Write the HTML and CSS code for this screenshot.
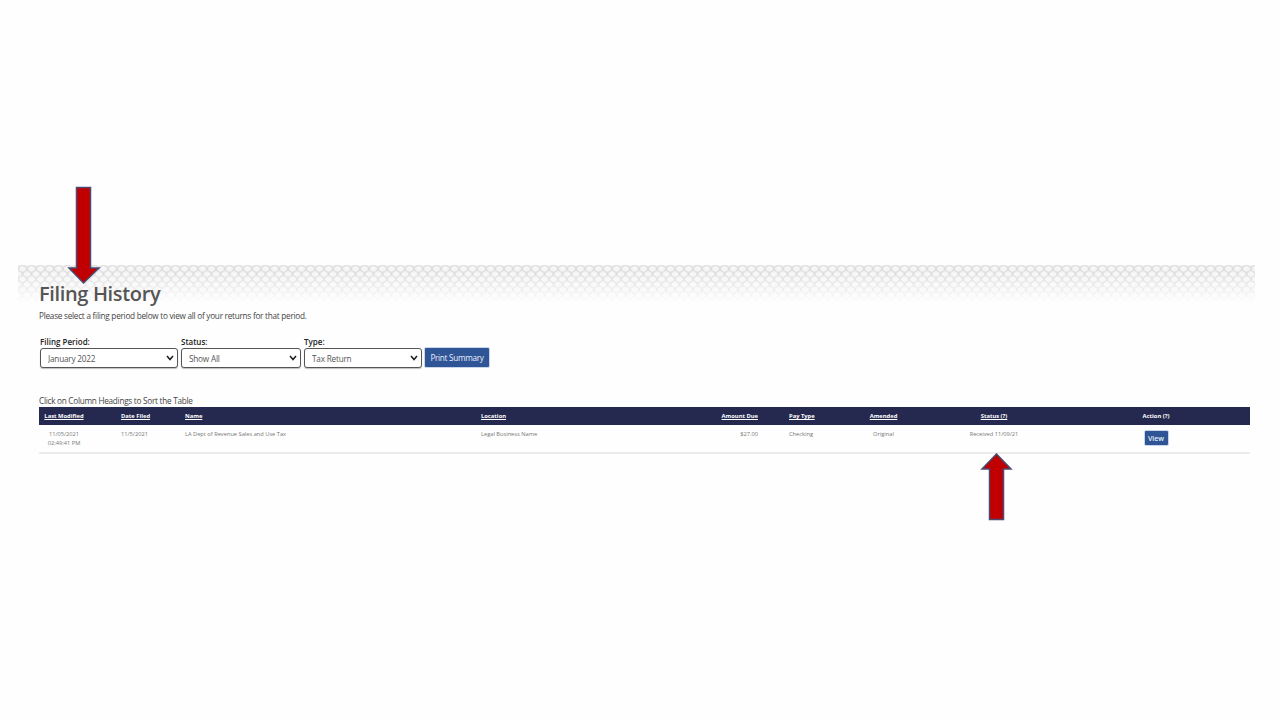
FILE: index.html
```html
<!DOCTYPE html>
<html lang="en">
  <head>
    <meta charset="UTF-8" />
    <title>Filing History</title>
    <link rel="stylesheet" href="styles.css">
  </head>
  <body>
    <div class="page">
      <svg class="band" width="1237" height="38">
        <defs>
          <pattern id="hex" width="9" height="10.400" patternUnits="userSpaceOnUse">
            <path d="M4.500 0.600L7.800 2.500V5L4.500 6.900L1.200 5V2.500Z" />
            <path d="M0 5.800L3.300 7.700V10.200L0 12.100L-3.300 10.200V7.700Z" />
            <path d="M9 5.800L12.300 7.700V10.200L9 12.100L5.700 10.200V7.700Z" />
            <path d="M0 -4.600L3.300 -2.700V-0.200L0 1.700L-3.300 -0.200V-2.700Z" />
            <path d="M9 -4.600L12.300 -2.700V-0.200L9 1.700L5.700 -0.200V-2.700Z" />
          </pattern>
        </defs>
        <rect class="band-base" width="1237" height="38" />
        <rect width="1237" height="38" fill="url(#hex)" />
      </svg>

      <svg class="arrow arrow-down" width="35" height="100" viewBox="0 0 35 100">
        <path d="M9.500 1.500H23.500V82H32L16.500 97L2 82H9.500Z" />
      </svg>
      <svg class="arrow arrow-up" width="35" height="70" viewBox="0 0 35 70">
        <path d="M16.500 1L31 16H23.500V66.500H9.500V16H2Z" />
      </svg>

      <h1>Filing History</h1>
      <p class="intro">Please select a filing period below to view all of your returns for that period.</p>

      <div class="filters">
        <label class="filter filter-period">
          <span>Filing Period:</span>
          <select><option>January 2022</option></select>
        </label>
        <label class="filter filter-status">
          <span>Status:</span>
          <select><option>Show All</option></select>
        </label>
        <label class="filter filter-type">
          <span>Type:</span>
          <select><option>Tax Return</option></select>
        </label>
        <button class="button print-button">Print Summary</button>
      </div>

      <p class="sort-hint">Click on Column Headings to Sort the Table</p>

      <table class="history">
        <colgroup>
          <col class="c-modified" />
          <col class="c-filed" />
          <col class="c-name" />
          <col class="c-location" />
          <col class="c-amount" />
          <col class="c-pay" />
          <col class="c-amended" />
          <col class="c-status" />
          <col class="c-action" />
        </colgroup>
        <thead>
          <tr>
            <th class="center"><a href="#">Last Modified</a></th>
            <th class="filed"><a href="#">Date Filed</a></th>
            <th><a href="#">Name</a></th>
            <th><a href="#">Location</a></th>
            <th class="right"><a href="#">Amount Due</a></th>
            <th class="pay"><a href="#">Pay Type</a></th>
            <th class="center"><a href="#">Amended</a></th>
            <th class="center"><a href="#">Status (?)</a></th>
            <th class="center action">Action (?)</th>
          </tr>
        </thead>
        <tbody>
          <tr>
            <td class="center">11/05/2021<br />02:49:41 PM</td>
            <td class="filed">11/5/2021</td>
            <td>LA Dept of Revenue Sales and Use Tax</td>
            <td>Legal Business Name</td>
            <td class="right">$27.00</td>
            <td class="pay">Checking</td>
            <td class="center">Original</td>
            <td class="center">Received 11/09/21</td>
            <td class="center action"><button class="button view-button">View</button></td>
          </tr>
        </tbody>
      </table>
    </div>
  </body>
</html>
```

FILE: styles.css
```css
body {
  margin: 0;
  background-color: #fefefe;
  font-family: "Open Sans", "Liberation Sans", sans-serif;
  color: #333333;
}

.page {
  position: relative;
  width: 1280px;
  height: 720px;
  padding: 280px 30px 0 39px;
  box-sizing: border-box;
  overflow: hidden;
}

/* hexagon strip behind the title */
.band {
  position: absolute;
  left: 18px;
  top: 265px;
  -webkit-mask-image: linear-gradient(to bottom, #000 0, #000 20%, transparent 100%);
  mask-image: linear-gradient(to bottom, #000 0, #000 20%, transparent 100%);
}

.band-base {
  fill: #dedede;
}

.band path {
  fill: #f6f6f6;
}

.arrow {
  position: absolute;
  z-index: 2;
}

.arrow path {
  fill: #c00000;
  stroke: #4b4a72;
  stroke-width: 1.5;
}

.arrow-down {
  left: 67px;
  top: 186px;
}

.arrow-up {
  left: 980px;
  top: 453px;
}

h1 {
  position: relative;
  margin: 0;
  font-size: 20px;
  line-height: 28px;
  font-weight: 600;
  letter-spacing: -0.35px;
  color: #555555;
}

.intro {
  position: relative;
  margin: 1px 0 0;
  font-size: 8.200px;
  line-height: 14px;
  letter-spacing: -0.25px;
  color: #444444;
}

.filters {
  display: flex;
  align-items: flex-end;
  margin: 12px 0 0 1px;
}

.filter {
  display: flex;
  flex-direction: column;
  margin-right: 3px;
}

.filter span {
  font-size: 8px;
  line-height: 13px;
  font-weight: 600;
  color: #222222;
}

.filter select {
  height: 20px;
  padding: 0 7px;
  border: 1px solid #555555;
  border-radius: 3px;
  background-color: #ffffff;
  background-image: url("data:image/svg+xml,%3Csvg xmlns='http://www.w3.org/2000/svg' width='8' height='6'%3E%3Cpath d='M1 1L4 4.500L7 1' fill='none' stroke='%23222' stroke-width='1.600'/%3E%3C/svg%3E");
  background-repeat: no-repeat;
  background-position: right 3px center;
  box-shadow: 0 1px 1px rgba(0, 0, 0, 0.25);
  -webkit-appearance: none;
  appearance: none;
  font-family: inherit;
  font-size: 8.200px;
  letter-spacing: -0.2px;
  color: #555555;
}

.filter-period select {
  width: 138px;
}

.filter-status select {
  width: 120px;
}

.filter-type select {
  width: 118px;
}

.button {
  border: 1px solid #c9d6ea;
  border-radius: 2px;
  background-color: #2f5597;
  color: #e8eef8;
  font-family: inherit;
  font-weight: 600;
  padding: 0;
}

.print-button {
  width: 66px;
  height: 21px;
  margin-left: -1px;
  font-size: 8.200px;
  font-weight: 400;
  letter-spacing: -0.3px;
}

.view-button {
  width: 25px;
  height: 16px;
  font-size: 7px;
}

.sort-hint {
  margin: 26px 0 0;
  font-size: 8.200px;
  line-height: 13px;
  letter-spacing: -0.26px;
  color: #444444;
}

.history {
  width: 1211px;
  table-layout: fixed;
  border-collapse: collapse;
}

.c-modified { width: 50px; }
.c-filed { width: 91px; }
.c-name { width: 296px; }
.c-location { width: 224px; }
.c-amount { width: 63px; }
.c-pay { width: 101px; }
.c-amended { width: 39px; }
.c-status { width: 182px; }
.c-action { width: 165px; }

.history th {
  height: 18px;
  padding: 0 5px;
  background-color: #25284f;
  color: #ffffff;
  font-size: 5.800px;
  font-weight: 700;
  text-align: left;
  white-space: nowrap;
}

.history th a {
  color: #ffffff;
}

.history td {
  height: 28px;
  padding: 5px 5px 0;
  box-sizing: border-box;
  vertical-align: top;
  border-bottom: 2px solid #ececec;
  font-size: 5.700px;
  line-height: 9px;
  color: #777777;
  white-space: nowrap;
}

.history .center {
  text-align: center;
}

.history .right {
  text-align: right;
}

.history .filed {
  padding-left: 32px;
}

.history .pay {
  padding-left: 26px;
}

.history .action {
  padding-right: 28px;
}
```
